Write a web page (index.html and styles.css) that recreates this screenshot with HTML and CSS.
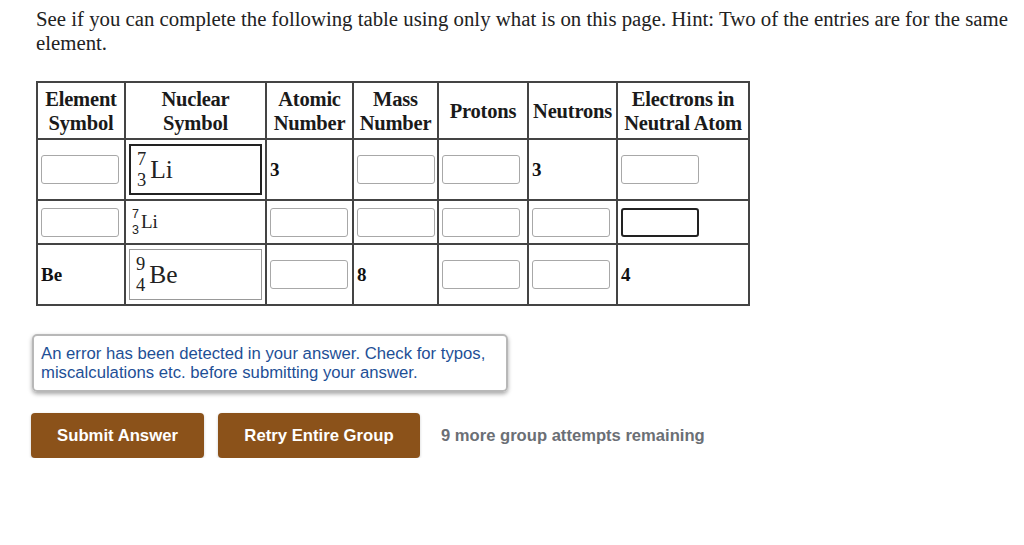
FILE: index.html
```html
<!DOCTYPE html>
<html>
<head>
<meta charset="utf-8">
<link rel="stylesheet" href="styles.css">
</head>
<body>
<div class="page">
  <p class="intro">See if you can complete the following table using only what is on this page. Hint: Two of the entries are for the same element.</p>
  <table class="grid">
    <colgroup>
      <col class="c1"><col class="c2"><col class="c3"><col class="c4"><col class="c5"><col class="c6"><col class="c7">
    </colgroup>
    <thead>
      <tr class="head">
        <th>Element<br>Symbol</th>
        <th>Nuclear<br>Symbol</th>
        <th>Atomic<br>Number</th>
        <th>Mass<br>Number</th>
        <th>Protons</th>
        <th>Neutrons</th>
        <th>Electrons in<br>Neutral Atom</th>
      </tr>
    </thead>
    <tbody>
      <tr class="r1">
        <td><input class="field" type="text"></td>
        <td><div class="nuc nuc-dark"><span class="iso"><span class="sup">7</span><span class="sub">3</span></span><span class="sym">Li</span></div></td>
        <td class="val">3</td>
        <td><input class="field" type="text"></td>
        <td><input class="field" type="text"></td>
        <td class="val">3</td>
        <td><input class="field" type="text"></td>
      </tr>
      <tr class="r2">
        <td><input class="field" type="text"></td>
        <td><div class="plain-nuc"><span class="small-iso"><span class="sup">7</span><span class="sub">3</span></span><span class="small-sym">Li</span></div></td>
        <td><input class="field" type="text"></td>
        <td><input class="field" type="text"></td>
        <td><input class="field" type="text"></td>
        <td><input class="field" type="text"></td>
        <td><input class="field field-focus" type="text"></td>
      </tr>
      <tr class="r3">
        <td class="val">Be</td>
        <td><div class="nuc nuc-light"><span class="iso"><span class="sup">9</span><span class="sub">4</span></span><span class="sym">Be</span></div></td>
        <td><input class="field" type="text"></td>
        <td class="val">8</td>
        <td><input class="field" type="text"></td>
        <td><input class="field" type="text"></td>
        <td class="val">4</td>
      </tr>
    </tbody>
  </table>
  <div class="alert">An error has been detected in your answer. Check for typos, miscalculations etc. before submitting your answer.</div>
  <div class="actions">
    <button class="btn btn-submit">Submit Answer</button>
    <button class="btn btn-retry">Retry Entire Group</button>
    <span class="remaining">9 more group attempts remaining</span>
  </div>
</div>
</body>
</html>
```
FILE: styles.css
```css
html, body {
  margin: 0;
  padding: 0;
  background: #ffffff;
}
.page {
  padding: 7px 0 0 36px;
}
.intro {
  margin: 0;
  width: 980px;
  font-family: "Liberation Serif", "Times New Roman", serif;
  font-size: 20.8px;
  line-height: 24px;
  color: #222;
}
.grid {
  margin-top: 26px;
  border-collapse: collapse;
  table-layout: fixed;
  width: 712px;
  border: 2px solid #444;
}
.grid col.c1 { width: 88px; }
.grid col.c2 { width: 141px; }
.grid col.c3 { width: 87px; }
.grid col.c4 { width: 85px; }
.grid col.c5 { width: 90px; }
.grid col.c6 { width: 89px; }
.grid col.c7 { width: 132px; }
.grid th, .grid td {
  border: 2px solid #444;
  padding: 0 0 0 3px;
  vertical-align: middle;
  text-align: left;
}
.grid th {
  font-family: "Liberation Serif", "Times New Roman", serif;
  font-weight: bold;
  font-size: 20.5px;
  line-height: 24px;
  color: #1a1a1a;
  text-align: center;
  padding: 0;
  white-space: nowrap;
  letter-spacing: -0.2px;
}
.head { height: 57px; }
.r1 { height: 61px; }
.r2 { height: 44px; }
.r3 { height: 61px; }
.val {
  font-family: "Liberation Serif", "Times New Roman", serif;
  font-weight: bold;
  font-size: 19px;
  color: #111;
}
.field {
  display: block;
  box-sizing: border-box;
  width: 78px;
  height: 29px;
  margin: 0;
  border: 1px solid #a8a8a8;
  border-radius: 3px;
  background: #fff;
  padding: 0;
}
.field-focus {
  border: 2px solid #222;
}
.nuc {
  box-sizing: border-box;
  width: 133px;
  height: 51px;
  display: flex;
  align-items: center;
  padding-left: 6px;
  font-family: "Liberation Serif", "Times New Roman", serif;
}
.nuc-dark { border: 2px solid #222; }
.nuc-light { border: 1px solid #999; }
.iso {
  display: flex;
  flex-direction: column;
  align-items: center;
  font-size: 18.5px;
  line-height: 21px;
  margin-right: 4px;
  margin-top: 0;
  color: #222;
}
.sym {
  font-size: 25.5px;
  line-height: 30px;
  margin-top: 0;
  color: #222;
}
.plain-nuc {
  display: flex;
  align-items: center;
  padding-left: 3px;
}
.small-iso {
  display: flex;
  flex-direction: column;
  align-items: center;
  font-family: "Liberation Sans", Arial, sans-serif;
  font-size: 12.5px;
  line-height: 16px;
  margin-top: 0;
  color: #222;
}
.small-sym {
  font-family: "Liberation Serif", "Times New Roman", serif;
  font-size: 19px;
  line-height: 22px;
  color: #222;
  margin-left: 2px;
}
.alert {
  box-sizing: border-box;
  width: 476px;
  margin: 28px 0 0 -4px;
  padding: 8px 6px 8px 7px;
  border: 2px solid #b8b8b8;
  border-radius: 5px;
  box-shadow: 0 2px 4px rgba(0,0,0,0.35);
  font-family: "Liberation Sans", Arial, sans-serif;
  font-size: 16.7px;
  line-height: 19px;
  color: #1e4f96;
}
.actions {
  display: flex;
  align-items: center;
  margin: 21px 0 0 -5px;
  gap: 14px;
}
.btn {
  height: 45px;
  border: none;
  border-radius: 4px;
  background: #8b521a;
  color: #fff;
  font-family: "Liberation Sans", Arial, sans-serif;
  font-weight: bold;
  font-size: 16.7px;
  box-shadow: 0 1px 3px rgba(0,0,0,0.2);
}
.btn-submit { width: 173px; }
.btn-retry { width: 202px; }
.remaining {
  margin-left: 7px;
  font-family: "Liberation Sans", Arial, sans-serif;
  font-weight: bold;
  font-size: 16.6px;
  color: #6b6f75;
}
```
